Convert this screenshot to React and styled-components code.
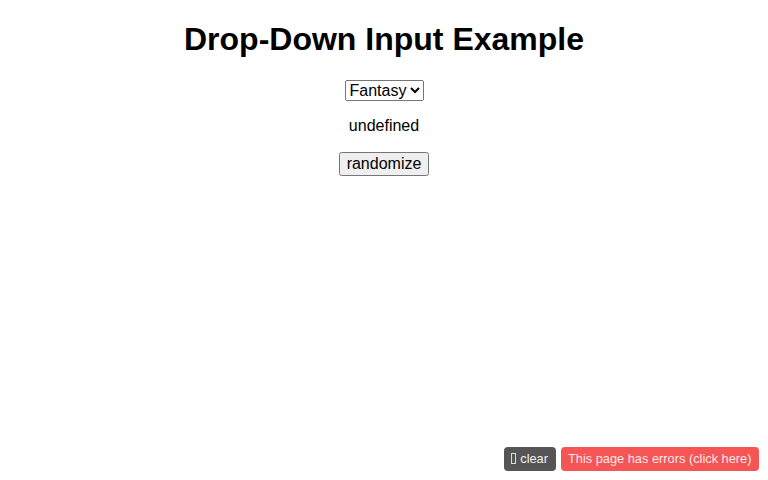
import React from "react";
import styled, { createGlobalStyle } from "styled-components";

const Global = createGlobalStyle`
  body {
    margin: 0;
    font-family: "Liberation Sans", Arial, sans-serif;
    background: #fff;
    color: #000;
  }
`;

const Page = styled.div`
  text-align: center;
  padding: 0 8px;
  display: flow-root;
`;

const Title = styled.h1`
  font-size: 32px;
  font-weight: bold;
  margin: 21.44px 0;
`;

const Select = styled.select`
  font-family: "Liberation Sans", Arial, sans-serif;
  font-size: 16px;
`;

const Output = styled.p`
  font-size: 16px;
  margin: 16px 0;
`;

const ButtonRow = styled.div`
  margin-top: 17px;
`;

const Button = styled.button`
  font-family: "Liberation Sans", Arial, sans-serif;
  font-size: 16px;
`;

const ErrorBar = styled.div`
  position: fixed;
  right: 9px;
  bottom: 9px;
  display: flex;
  gap: 5px;
`;

const Pill = styled.button`
  font-family: "Liberation Sans", Arial, sans-serif;
  font-size: 12.8px;
  line-height: 16px;
  height: 24px;
  padding: 4px 7.5px;
  border: none;
  border-radius: 4px;
  color: ${(p) => (p.$danger ? "#fde9e9" : "#f2f2f2")};
  background: ${(p) => (p.$danger ? "#f55555" : "#555555")};
  cursor: pointer;
`;

const Glyph = styled.span`
  display: inline-block;
  width: 3px;
  height: 9px;
  border: 1px solid #ddd;
  margin-right: 4px;
  vertical-align: -1px;
`;

export default function App() {
  return (
    <>
      <Global />
      <Page>
        <Title>Drop-Down Input Example</Title>
        <Select defaultValue="Fantasy">
          <option>Fantasy</option>
          <option>Sci-Fi</option>
          <option>Mystery</option>
        </Select>
        <Output>undefined</Output>
        <ButtonRow>
          <Button>randomize</Button>
        </ButtonRow>
      </Page>
      <ErrorBar>
        <Pill>
          <Glyph />
          clear
        </Pill>
        <Pill $danger>This page has errors (click here)</Pill>
      </ErrorBar>
    </>
  );
}
